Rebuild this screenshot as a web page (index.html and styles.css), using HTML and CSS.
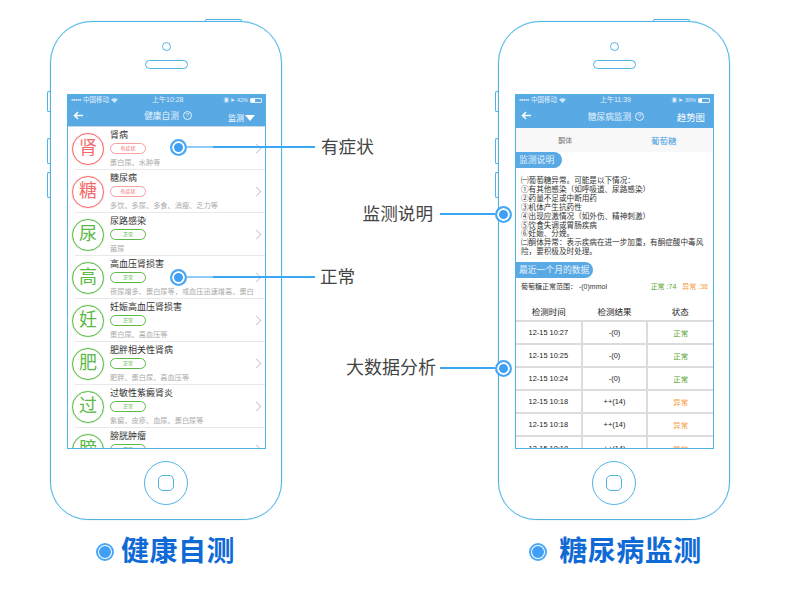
FILE: index.html
```html
<!DOCTYPE html>
<html lang="zh-CN">
<head>
  <meta charset="UTF-8">
  <title>健康自测 糖尿病监测</title>
  <link rel="stylesheet" href="styles.css">
</head>
<body>
<div class="page">

  <!-- 健康自测 -->
  <div class="col">
    <div class="phone">
      <i class="btn-power"></i><i class="btn-side s1"></i><i class="btn-side s2"></i><i class="btn-side s3"></i>
      <div class="camera"></div>
      <div class="speaker"></div>
      <div class="screen">
        <div class="head">
          <div class="status">
            <span class="dots">●●●●●</span><span>中国移动</span>
            <svg class="wifi" viewBox="0 0 10 7"><path d="M0 2.2Q5 -1.6 10 2.2L5 7Z" fill="#cfe6f8"/></svg>
            <span class="clock">上午10:28</span>
            <span class="right">◉ ➤ 42%</span><i class="battery"><b class="lvl42"></b></i>
          </div>
          <div class="nav nav-short">
            <svg class="back" viewBox="0 0 12 10"><path d="M11 5H1.5M5.5 1L1.5 5L5.5 9" fill="none" stroke="#fff" stroke-width="1.6"/></svg>
            <span class="nav-title">健康自测<i class="help">?</i></span>
            <span class="nav-right small">监测<i class="caret"></i></span>
          </div>
        </div>
        <ul class="list">
          <li class="row red">
            <span class="ring">肾</span>
            <div class="info"><p class="name">肾病</p><span class="tag">有症状</span><p class="desc">蛋白尿、水肿等</p></div>
            <i class="chev"></i>
          </li>
          <li class="row red">
            <span class="ring">糖</span>
            <div class="info"><p class="name">糖尿病</p><span class="tag">有症状</span><p class="desc">多饮、多尿、多食、消瘦、乏力等</p></div>
            <i class="chev"></i>
          </li>
          <li class="row">
            <span class="ring">尿</span>
            <div class="info"><p class="name">尿路感染</p><span class="tag">正常</span><p class="desc">菌尿</p></div>
            <i class="chev"></i>
          </li>
          <li class="row">
            <span class="ring">高</span>
            <div class="info"><p class="name">高血压肾损害</p><span class="tag">正常</span><p class="desc">夜尿增多、蛋白尿等，或血压迅速增高、蛋白</p></div>
            <i class="chev"></i>
          </li>
          <li class="row">
            <span class="ring">妊</span>
            <div class="info"><p class="name">妊娠高血压肾损害</p><span class="tag">正常</span><p class="desc">蛋白尿、高血压等</p></div>
            <i class="chev"></i>
          </li>
          <li class="row">
            <span class="ring">肥</span>
            <div class="info"><p class="name">肥胖相关性肾病</p><span class="tag">正常</span><p class="desc">肥胖、蛋白尿、高血压等</p></div>
            <i class="chev"></i>
          </li>
          <li class="row">
            <span class="ring">过</span>
            <div class="info"><p class="name">过敏性紫癜肾炎</p><span class="tag">正常</span><p class="desc">紫癜、皮疹、血尿、蛋白尿等</p></div>
            <i class="chev"></i>
          </li>
          <li class="row">
            <span class="ring">膀</span>
            <div class="info"><p class="name">膀胱肿瘤</p><span class="tag">正常</span><p class="desc">血尿</p></div>
            <i class="chev"></i>
          </li>
        </ul>
      </div>
      <div class="home"><i></i></div>
    </div>
    <div class="caption"><i class="cap-dot"></i>健康自测</div>
  </div>

  <!-- 糖尿病监测 -->
  <div class="col">
    <div class="phone">
      <i class="btn-power"></i><i class="btn-side s1"></i><i class="btn-side s2"></i><i class="btn-side s3"></i>
      <div class="camera"></div>
      <div class="speaker"></div>
      <div class="screen">
        <div class="head">
          <div class="status">
            <span class="dots">●●●●●</span><span>中国移动</span>
            <svg class="wifi" viewBox="0 0 10 7"><path d="M0 2.2Q5 -1.6 10 2.2L5 7Z" fill="#cfe6f8"/></svg>
            <span class="clock">上午11:39</span>
            <span class="right">◉ ➤ 30%</span><i class="battery"><b class="lvl30"></b></i>
          </div>
          <div class="nav">
            <svg class="back" viewBox="0 0 12 10"><path d="M11 5H1.5M5.5 1L1.5 5L5.5 9" fill="none" stroke="#fff" stroke-width="1.6"/></svg>
            <span class="nav-title">糖尿病监测<i class="help">?</i></span>
            <span class="nav-right">趋势图</span>
          </div>
        </div>
        <div class="tabs"><span>酮体</span><span class="on">葡萄糖</span></div>
        <div class="pill">监测说明</div>
        <div class="notes">
          <p>㈠葡萄糖异常。可能是以下情况：</p>
          <p>①有其他感染（如呼吸道、尿路感染）</p>
          <p>②药量不足或中断用药</p>
          <p>③机体产生抗药性</p>
          <p>④出现应激情况（如外伤、精神刺激）</p>
          <p>⑤饮食失调或胃肠疾病</p>
          <p>⑥妊娠、分娩。</p>
          <p>㈡酮体异常：表示疾病在进一步加重，有酮症酸中毒风险，要积极及时处理。</p>
        </div>
        <div class="pill pill-wide">最近一个月的数据</div>
        <div class="range">
          <span class="range-text">葡萄糖正常范围： -(0)mmol</span>
          <span class="ok">正常 :74</span><span class="bad">异常 :38</span>
        </div>
        <table class="data">
          <thead>
            <tr><th>检测时间</th><th>检测结果</th><th>状态</th></tr>
          </thead>
          <tbody>
            <tr><td>12-15 10:27</td><td>-(0)</td><td class="ok">正常</td></tr>
            <tr><td>12-15 10:25</td><td>-(0)</td><td class="ok">正常</td></tr>
            <tr><td>12-15 10:24</td><td>-(0)</td><td class="ok">正常</td></tr>
            <tr><td>12-15 10:18</td><td>++(14)</td><td class="bad">异常</td></tr>
            <tr><td>12-15 10:18</td><td>++(14)</td><td class="bad">异常</td></tr>
            <tr><td>12-15 10:18</td><td>++(14)</td><td class="bad">异常</td></tr>
          </tbody>
        </table>
      </div>
      <div class="home"><i></i></div>
    </div>
    <div class="caption caption-wide"><i class="cap-dot"></i>糖尿病监测</div>
  </div>

  <!-- 标注 -->
  <div class="note n1"><i class="pin"></i><i class="line"></i><span>有症状</span></div>
  <div class="note n2"><i class="pin"></i><i class="line"></i><span>正常</span></div>
  <div class="note n3"><span>监测说明</span><i class="line"></i><i class="pin"></i></div>
  <div class="note n4"><span>大数据分析</span><i class="line"></i><i class="pin"></i></div>
</div>
</body>
</html>
```

FILE: styles.css
```css
* {
  box-sizing: border-box;
}
body {
  margin: 0;
  background-color: #fff;
  font-family: "Liberation Sans", "Noto Sans CJK SC", sans-serif;
  color: #333;
}
p {
  margin: 0;
}
.page {
  position: relative;
  width: 790px;
  height: 594px;
  overflow: hidden;
  display: flex;
  gap: 216px;
  padding: 21px 0 0 50px;
}
.col {
  width: 232px;
}

/* 手机外框 */
.phone {
  position: relative;
  height: 499px;
  border: 1px solid #4fb4e4;
  border-radius: 42px 42px 38px 38px;
  box-shadow: 0 0 1px #4fb4e4;
  display: flex;
  flex-direction: column;
  align-items: center;
  padding-top: 20px;
}
.btn-power {
  position: absolute;
  top: -3px;
  left: 154px;
  width: 37px;
  height: 3px;
  border: 1px solid #4fb4e4;
  border-bottom: none;
  border-radius: 2px 2px 0 0;
}
.btn-side {
  position: absolute;
  left: -4px;
  width: 3px;
  border: 1px solid #4fb4e4;
  border-right: none;
  border-radius: 2px 0 0 2px;
}
.s1 { top: 69px; height: 21px; }
.s2 { top: 116px; height: 26px; }
.s3 { top: 150px; height: 26px; }
.camera {
  width: 9px;
  height: 9px;
  border: 1px solid #4fb4e4;
  border-radius: 50%;
}
.speaker {
  width: 43px;
  height: 9px;
  margin-top: 9px;
  border: 1px solid #4fb4e4;
  border-radius: 5px;
}
.screen {
  width: 199px;
  height: 355px;
  margin: 25px 0 0 1px;
  border: 1px solid #4fb4e4;
  overflow: hidden;
  background-color: #fff;
}
.home {
  width: 44px;
  height: 44px;
  margin-top: 12px;
  border: 1px solid #4fb4e4;
  border-radius: 50%;
  display: flex;
  align-items: center;
  justify-content: center;
}
.home i {
  width: 16px;
  height: 16px;
  border: 1px solid #4fb4e4;
  border-radius: 5px;
}

/* 顶部 */
.head {
  background-color: #58a9e4;
  color: #fff;
}
.status {
  position: relative;
  height: 10px;
  padding: 0 3px;
  display: flex;
  align-items: center;
  gap: 2px;
  font-size: 6.5px;
  line-height: 10px;
  color: #e3f0fb;
}
.dots {
  font-size: 4px;
  letter-spacing: -0.4px;
}
.wifi {
  width: 7px;
  height: 5px;
}
.clock {
  position: absolute;
  left: 84px;
  font-size: 7px;
}
.right {
  margin-left: auto;
  font-size: 5.5px;
}
.battery {
  width: 12px;
  height: 5px;
  border: 1px solid #e3f0fb;
  border-radius: 1px;
  display: block;
}
.battery b {
  display: block;
  height: 100%;
  background-color: #fff;
}
.lvl42 { width: 42%; }
.lvl30 { width: 30%; }
.nav {
  position: relative;
  height: 23px;
  display: flex;
  align-items: center;
  justify-content: center;
  font-size: 8.7px;
}
.nav-short {
  height: 21px;
}
.back {
  position: absolute;
  left: 5px;
  top: 6px;
  width: 11px;
  height: 9px;
}
.nav-title {
  display: flex;
  align-items: center;
  gap: 4px;
  margin-left: 3px;
  color: #e6f2fc;
}
.help {
  width: 9px;
  height: 9px;
  border: 1px solid #e6f2fc;
  border-radius: 50%;
  font-size: 6px;
  line-height: 7px;
  font-style: normal;
  text-align: center;
}
.nav-right {
  position: absolute;
  right: 8px;
  font-size: 9.4px;
  display: flex;
  align-items: center;
  gap: 1px;
}
.nav-right.small {
  right: 10px;
  top: 7px;
  font-size: 8px;
}
.caret {
  width: 0;
  height: 0;
  border-left: 5px solid transparent;
  border-right: 5px solid transparent;
  border-top: 6px solid #fff;
}

/* 健康自测列表 */
.list {
  margin: 0;
  padding: 0;
  list-style: none;
  border-top: 1px solid #c8d9e6;
}
.row {
  --tone: #5cb946;
  position: relative;
  height: 43px;
  padding-left: 4px;
  display: flex;
  align-items: center;
  gap: 6px;
}
.row.red {
  --tone: #f4686a;
}
.row::after {
  content: "";
  position: absolute;
  left: 7px;
  right: 0;
  bottom: 0;
  height: 1px;
  background-color: #e8e8e8;
}
.ring {
  flex: none;
  width: 32px;
  height: 32px;
  border: 1px solid var(--tone);
  border-radius: 50%;
  box-shadow: 0 0 1px var(--tone);
  color: var(--tone);
  font-size: 18px;
  line-height: 29px;
  text-align: center;
}
.info {
  flex: 1;
  min-width: 0;
  height: 43px;
  padding-top: 2px;
  white-space: nowrap;
}
.name {
  font-size: 9px;
  line-height: 12px;
  color: #333;
}
.tag {
  display: block;
  width: 36px;
  height: 11px;
  margin-top: 2px;
  border: 1px solid var(--tone);
  border-radius: 6px;
  color: var(--tone);
  font-size: 5px;
  line-height: 9px;
  text-align: center;
}
.row.red .tag {
  border-color: #f7a0a0;
}
.desc {
  margin-top: 3px;
  font-size: 7.2px;
  line-height: 11px;
  color: #aaa;
}
.chev {
  position: absolute;
  right: 5px;
  top: 18px;
  width: 7px;
  height: 7px;
  border-top: 1px solid #ccc;
  border-right: 1px solid #ccc;
  transform: rotate(45deg);
}

/* 糖尿病监测 */
.tabs {
  height: 24px;
  display: flex;
  align-items: center;
  background-color: #f8f8f8;
  font-size: 7px;
  color: #777;
}
.tabs span {
  flex: 1;
  text-align: center;
}
.tabs .on {
  font-size: 8.5px;
  color: #4a9fdd;
}
.pill {
  width: 46px;
  height: 16px;
  border-radius: 0 8px 8px 0;
  background-color: #58a9e4;
  color: #e6f2fc;
  font-size: 8.8px;
  line-height: 16px;
  padding-left: 3px;
  white-space: nowrap;
}
.pill-wide {
  width: 77px;
  margin-top: 5px;
}
.notes {
  padding: 9px 8px 0 5px;
  font-size: 7.6px;
  line-height: 8.9px;
  color: #333;
}
.range {
  height: 16px;
  padding: 0 5px;
  display: flex;
  align-items: center;
  gap: 6px;
  font-size: 7px;
}
.range-text {
  margin-right: auto;
}
.ok {
  color: #5aa52f;
}
.bad {
  color: #f59a3c;
}
.data {
  width: 197px;
  margin-top: 10px;
  border-collapse: collapse;
  table-layout: fixed;
  font-size: 7.4px;
  color: #222;
}
.data th,
.data td {
  height: 23px;
  padding: 0;
  font-weight: normal;
  text-align: center;
}
.data th {
  height: 16px;
  font-size: 8.5px;
  line-height: 16px;
}
.data td {
  border-top: 2px solid #dcdcdc;
}
.data td + td {
  border-left: 2px solid #dcdcdc;
}
.data .ok {
  color: #5aa52f;
}
.data .bad {
  color: #f59a3c;
}

/* 标题 */
.caption {
  margin-top: 15px;
  display: flex;
  align-items: center;
  justify-content: center;
  gap: 8px;
  font-size: 28px;
  line-height: 34px;
  font-weight: bold;
  letter-spacing: 0.5px;
  color: #0f6ad6;
}
.caption-wide {
  gap: 13px;
  padding-left: 4px;
}
.cap-dot {
  width: 16px;
  height: 16px;
  border: 2px solid #fff;
  outline: 2px solid #4aa8f5;
  outline-offset: -1px;
  border-radius: 50%;
  background-color: #3f9ff5;
}

/* 标注线 */
.note {
  position: absolute;
  display: flex;
  align-items: center;
  height: 22px;
  font-size: 17.6px;
  line-height: 22px;
  color: #444;
  white-space: nowrap;
}
.pin {
  flex: none;
  width: 17px;
  height: 17px;
  border: 2px solid #4aa8f5;
  border-radius: 50%;
  background-color: #3f9ff5;
  box-shadow: inset 0 0 0 2px #fff;
}
.line {
  flex: none;
  height: 2px;
  background-color: #3ba7f2;
}
.n1 .line,
.n2 .line {
  background: linear-gradient(to right, #8fcdf6 26px, #3ba7f2 26px);
}
.n1 { left: 170px; top: 136px; }
.n1 .line { width: 128px; margin-right: 6px; }
.n2 { left: 170px; top: 266px; }
.n2 .line { width: 128px; margin-right: 5px; }
.n3 { right: 278px; top: 203px; }
.n3 .line { width: 55px; margin-left: 7px; }
.n4 { right: 278px; top: 357px; }
.n4 .line { width: 55px; margin-left: 4px; }
.n4 span { font-size: 18px; }
```
